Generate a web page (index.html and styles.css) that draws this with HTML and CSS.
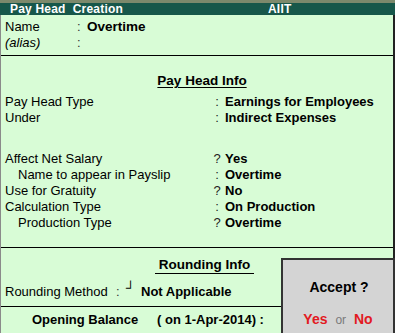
FILE: index.html
```html
<!DOCTYPE html>
<html lang="en">
<head>
  <meta charset="UTF-8">
  <title>Pay Head Creation</title>
  <link rel="stylesheet" href="styles.css">
</head>
<body>
  <div class="screen">
    <div class="top-strip"></div>
    <div class="title-bar">
      <span class="title-left">Pay Head&nbsp; Creation</span>
      <span class="title-company">AIIT</span>
    </div>

    <div class="form">
      <!-- name -->
      <div class="section name-section">
        <div class="name-row">
          <span class="name-label">Name</span>
          <span class="name-sep">:</span>
          <span class="value name-value">Overtime</span>
        </div>
        <div class="name-row">
          <span class="name-label alias">(alias)</span>
          <span class="name-sep">:</span>
          <span></span>
        </div>
      </div>

      <!-- pay head info -->
      <div class="section info-section">
        <div class="section-title"><span>Pay Head Info</span></div>
        <div class="rows">
          <span>Pay Head Type</span><span class="sep">:</span><span class="value">Earnings for Employees</span>
          <span>Under</span><span class="sep">:</span><span class="value">Indirect Expenses</span>
        </div>
        <div class="rows rows-gap">
          <span>Affect Net Salary</span><span class="sep">?</span><span class="value">Yes</span>
          <span class="indent">Name to appear in Payslip</span><span class="sep">:</span><span class="value">Overtime</span>
          <span>Use for Gratuity</span><span class="sep">?</span><span class="value">No</span>
          <span>Calculation Type</span><span class="sep">:</span><span class="value">On Production</span>
          <span class="indent">Production Type</span><span class="sep">?</span><span class="value">Overtime</span>
        </div>
      </div>

      <!-- rounding -->
      <div class="section round-section">
        <div class="section-title round-title"><span>Rounding Info</span></div>
        <div class="round-row">
          <span class="round-label">Rounding Method</span>
          <span class="round-sep">:</span>
          <span class="round-mark">┘</span>
          <span class="value">Not Applicable</span>
        </div>
      </div>

      <div class="opening">
        <span class="opening-label">Opening Balance</span>
        <span>( on 1-Apr-2014) :</span>
      </div>

      <div class="accept-box">
        <div class="accept-title">Accept ?</div>
        <div class="accept-options">
          <span class="answer">Yes</span>
          <span class="or">or</span>
          <span class="answer">No</span>
        </div>
      </div>
    </div>
  </div>
</body>
</html>
```

FILE: styles.css
```css
* {
  margin: 0;
  padding: 0;
  box-sizing: border-box;
}

body {
  font-family: "Liberation Sans", Arial, sans-serif;
  font-size: 13px;
  color: #000;
  background: #d8fcd6;
  overflow: hidden;
}

.screen {
  width: 395px;
  height: 333px;
  display: flex;
  flex-direction: column;
  overflow: hidden;
}

.top-strip {
  height: 3px;
  background: #7c896c;
}

.title-bar {
  height: 12px;
  background: #17574a;
  color: #fff;
  font-size: 12px;
  font-weight: bold;
  line-height: 12px;
  display: flex;
  letter-spacing: 0.2px;
}

.title-left {
  width: 268px;
  padding-left: 10px;
}

.form {
  flex: 1;
  position: relative;
  background: #d8fcd6;
  border-left: 1px solid #8a8a8a;
  border-right: 2px solid #222;
}

.section {
  border-bottom: 1px solid #000;
}

.value {
  font-weight: bold;
}

/* name */
.name-section {
  height: 41px;
  padding-top: 4px;
}

.name-row {
  display: flex;
  line-height: 16px;
}

.name-label {
  width: 76px;
  padding-left: 4px;
}

.name-value {
  font-size: 13.5px;
}

.alias {
  font-style: italic;
}

.name-sep {
  width: 10px;
  color: #333;
}

/* pay head info */
.info-section {
  height: 192px;
  padding-top: 17px;
}

.section-title {
  text-align: center;
  padding-left: 10px;
  font-size: 13.5px;
  font-weight: bold;
  line-height: 16px;
}

.section-title span {
  text-decoration: underline;
  text-underline-offset: 2px;
}

.rows {
  display: grid;
  grid-template-columns: 207px 10px 1fr;
  line-height: 16px;
  margin-top: 5px;
  padding-left: 4px;
}

.rows-gap {
  margin-top: 25px;
}

.sep {
  text-align: center;
  color: #222;
}

.rows .value {
  padding-left: 3px;
}

.indent {
  padding-left: 13px;
}

/* rounding */
.round-section {
  height: 59px;
  padding-top: 9px;
}

.round-title span {
  display: inline-block;
  padding: 0 4px 1px;
  text-decoration: none;
  border-bottom: 1px solid #000;
  line-height: 15px;
}

.round-title {
  padding-left: 15px;
}

.round-row {
  display: flex;
  align-items: center;
  line-height: 16px;
  margin-top: 10px;
}

.round-label {
  width: 115px;
  padding-left: 4px;
}

.round-sep {
  width: 10px;
  color: #333;
}

.round-mark {
  width: 15px;
  font-size: 13px;
  font-weight: bold;
  position: relative;
  top: -4px;
}

/* opening balance */
.opening {
  display: flex;
  padding-top: 5px;
  line-height: 16px;
  font-weight: bold;
}

.opening-label {
  width: 156px;
  padding-left: 31px;
}

/* accept dialog */
.accept-box {
  position: absolute;
  left: 280px;
  top: 243px;
  right: -2px;
  height: 80px;
  background: #d4d4d4;
  border: 2px solid #333;
  text-align: center;
  font-weight: bold;
  font-size: 14px;
}

.accept-title {
  margin-top: 19px;
  padding-left: 2px;
}

.accept-options {
  margin-top: 16px;
}

.answer {
  color: #e21a22;
}

.or {
  color: #7a7a7a;
  font-weight: normal;
  font-size: 12px;
  margin: 0 4px;
}
```
